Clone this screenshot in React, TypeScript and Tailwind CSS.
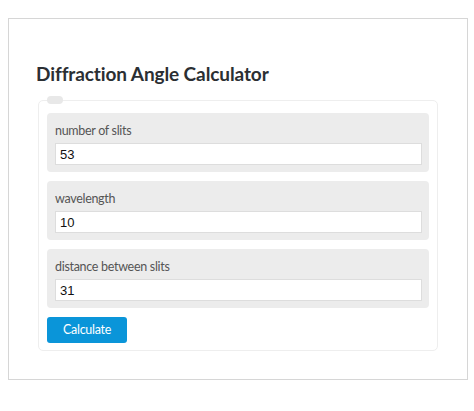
import React from "react";

const fields = [
  { label: "number of slits", value: "53" },
  { label: "wavelength", value: "10" },
  { label: "distance between slits", value: "31" },
];

export default function App() {
  return (
    <div className="w-[474px] h-[411px] bg-white pt-[18px] pl-[8px]" style={{ fontFamily: 'Lato, "Open Sans", sans-serif' }}>
      <div className="w-[460px] h-[362px] border border-[#d6d6d6] pt-[43px] pl-[27px]">
        <h1 className="text-[19px] leading-[24px] font-bold text-[#2b2f33] h-[24px] tracking-[-0.1px]">Diffraction Angle Calculator</h1>
        <div className="relative ml-[2px] mt-[14px] w-[400px] h-[251px] border border-[#eeeeee] rounded-[5px] px-[8px] pt-[12px]">
          <div className="absolute left-[8px] top-[-5px] w-[16px] h-[8px] rounded-[4px] bg-[#e8e8e8]" />
          <div className="flex flex-col gap-[9px]">
            {fields.map((f) => (
              <div key={f.label} className="h-[59px] bg-[#ececec] rounded-[4px] px-[8px] pt-[8px]">
                <div className="text-[12.5px] leading-[20px] tracking-[-0.3px] text-[#555555] h-[22px]">{f.label}</div>
                <input
                  readOnly
                  value={f.value}
                  className="block w-[367px] h-[22px] bg-white border border-[#dddddd] px-[4px] text-[13px] text-[#111] outline-none"
                  style={{ fontFamily: '"Liberation Sans", Arial, sans-serif' }}
                />
              </div>
            ))}
          </div>
          <button className="mt-[9px] w-[80px] h-[26px] rounded-[3px] bg-[#0a95d9] text-white text-[12.5px] tracking-[-0.3px] leading-[26px]">
            Calculate
          </button>
        </div>
      </div>
    </div>
  );
}
